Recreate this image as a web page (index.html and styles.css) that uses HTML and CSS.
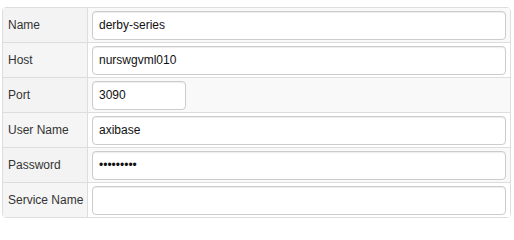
FILE: index.html
```html
<!DOCTYPE html>
<html>
<head>
<meta charset="utf-8">
<link rel="stylesheet" href="styles.css">
</head>
<body>
<table class="props">
  <tr class="odd"><th>Name</th><td><input class="field" type="text" value="derby-series"></td></tr>
  <tr><th>Host</th><td><input class="field" type="text" value="nurswgvml010"></td></tr>
  <tr class="odd"><th>Port</th><td><input class="field short" type="text" value="3090"></td></tr>
  <tr><th>User Name</th><td><input class="field" type="text" value="axibase"></td></tr>
  <tr class="odd"><th>Password</th><td><input class="field" type="password" value="123456789"></td></tr>
  <tr><th>Service Name</th><td><input class="field" type="text" value=""></td></tr>
</table>
</body>
</html>
```
FILE: styles.css
```css
html, body {
  margin: 0;
  padding: 0;
  background: #fff;
}
body {
  padding: 7px 0 0 2px;
  font-family: "Liberation Sans", Arial, sans-serif;
  font-size: 12px;
  color: #333;
}
.props {
  width: 509px;
  border-collapse: separate;
  border-spacing: 0;
  border: 1px solid #ddd;
  border-radius: 4px;
  table-layout: fixed;
}
.props th,
.props td {
  box-sizing: border-box;
  height: 35px;
  padding: 0;
  border-top: 1px solid #ddd;
  vertical-align: middle;
}
.props tr:first-child th,
.props tr:first-child td {
  border-top: 0;
  height: 34px;
}
.props th {
  width: 85px;
  padding-left: 5px;
  text-align: left;
  font-weight: normal;
  background: #f5f5f5;
  border-right: 1px solid #ddd;
}
.props tr.odd th {
  background: #f3f3f3;
}
.props td {
  padding: 0 3px 0 4px;
  background: #fff;
}
.props tr.odd td {
  background: #f9f9f9;
}
.field {
  display: block;
  box-sizing: border-box;
  width: 414px;
  height: 29px;
  margin: 0;
  padding: 0 6px;
  font-family: "Liberation Sans", Arial, sans-serif;
  font-size: 12px;
  color: #111;
  background: #fff;
  border: 1px solid #ccc;
  border-radius: 4px;
  box-shadow: inset 0 1px 1px rgba(0, 0, 0, 0.075);
  outline: none;
}
.field.short {
  width: 94px;
}
```
